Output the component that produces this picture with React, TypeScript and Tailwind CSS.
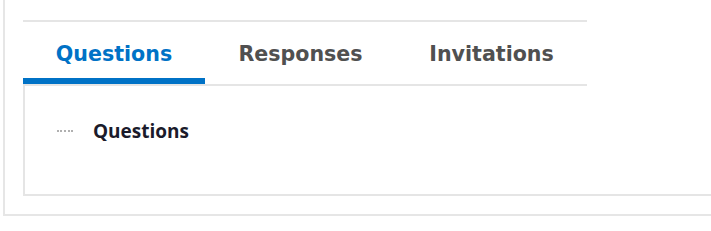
import React from "react";

const tabs = [
  { t: "Questions", w: "w-[182px]" },
  { t: "Responses", w: "w-[191px]" },
  { t: "Invitations", w: "w-[191px]" },
];

export default function App() {
  return (
    <div className="w-[711px] h-[231px] overflow-hidden bg-white">
      <div className="ml-[3px] w-[800px] border-l-2 border-b-2 border-[#e6e6e6] pl-[18px] pt-[20px] pb-[18px]">
        <div
          className="flex w-[564px] border-t-2 border-b-2 border-[#e5e5e5]"
          style={{ fontFamily: '"DejaVu Sans", Verdana, sans-serif' }}
        >
          {tabs.map((x, i) => (
            <div
              key={x.t}
              className={
                x.w +
                " h-[62px] flex items-center justify-center text-[20.6px] font-bold pt-[8px] border-b-[6px] " +
                (i === 0
                  ? "text-[#0072c6] border-[#0072c6]"
                  : "text-[#505050] border-transparent")
              }
            >
              {x.t}
            </div>
          ))}
        </div>
        <div className="h-[110px] border-l-2 border-b-2 border-[#e5e5e5] flex items-start pt-[31px] pl-[32px]">
          <div className="flex items-center gap-[20px]">
            <div className="w-[16px] border-t-2 border-dotted border-[#b0b0b0]" />
            <span
              className="text-[19px] font-bold text-[#1b1b2b]"
              style={{ fontFamily: '"Open Sans", sans-serif' }}
            >
              Questions
            </span>
          </div>
        </div>
      </div>
    </div>
  );
}
